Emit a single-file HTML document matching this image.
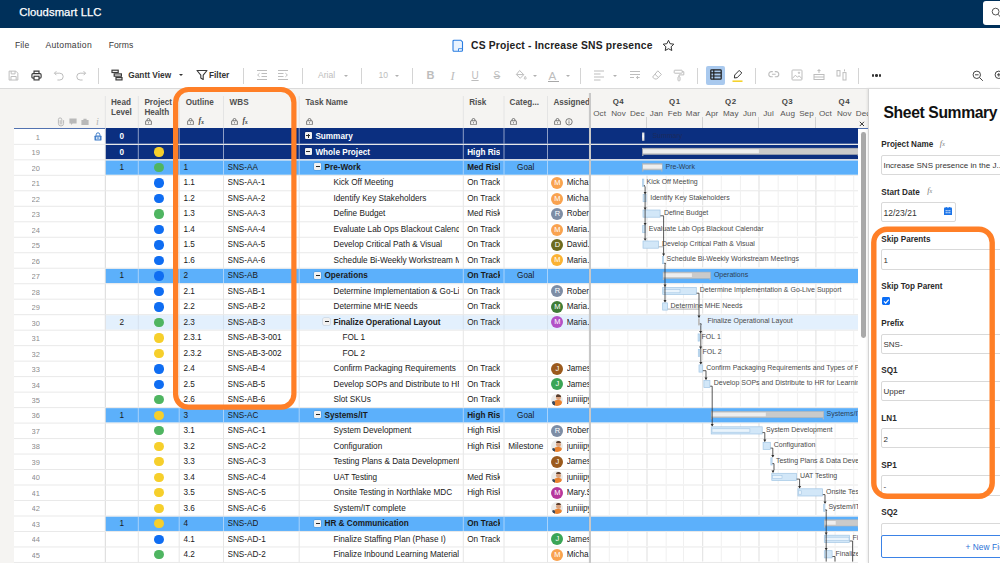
<!DOCTYPE html>
<html lang="en"><head><meta charset="utf-8"><title>CS Project - Increase SNS presence</title>
<style>
*{box-sizing:border-box}
html,body{margin:0;padding:0}
html{overflow:hidden;width:1000px;height:563px}
body{width:1000px;height:563px;overflow:hidden;position:relative;background:#fff;font-family:"Liberation Sans",sans-serif;color:#222}
.abs{position:absolute}
.t{position:absolute;white-space:nowrap;line-height:1}
#topbar{left:0;top:0;width:1000px;height:27.5px;background:#00305a}
#grid{left:0;top:88px;width:868.5px;height:475px;background:#fff;overflow:hidden}
.hdr{position:absolute;left:0;top:0;width:868.5px;height:40.2px;background:#f5f4f2}
.gut{position:absolute;left:0;top:0;width:14px;height:475px;background:#f5f4f2}
.row{position:absolute;left:14px;width:844.4px}
.c{position:absolute;top:0;height:100%;overflow:hidden;white-space:nowrap;font-size:8.2px;line-height:1;color:#1a1a1a}
.c>span.x{position:absolute;overflow:hidden;font-weight:inherit;line-height:1;white-space:nowrap;padding:2px 0 3px;margin-top:-2px}
.navy .c{color:#fff}
.vl{position:absolute;top:0;width:1px;background:#e0e0e0}
.c>span.num{font-size:7.5px;color:#8c8c8c}
.dot{position:absolute;width:9.3px;height:9.3px;border-radius:50%}
.av{position:absolute;width:12px;height:12px;border-radius:50%;color:#fff;font-size:7.5px;text-align:center;line-height:12.3px}
.tg{position:absolute;width:7px;height:7px;border-radius:1.1px;background:#f1f1f1;box-shadow:0 0 0 .5px rgba(0,0,0,.16)}
.tg i{position:absolute;background:#2b2b2b}
.lbl{font-weight:bold;font-size:8.15px;color:#2a2a2a}
.inp{position:absolute;border:1px solid #d9d9d9;border-radius:2px;background:#fff;height:20.4px;font-size:8px;color:#333;line-height:19.4px;padding-left:1.7px;white-space:nowrap;overflow:hidden;letter-spacing:0.02px}
.ht{font-weight:bold;font-size:8.15px;color:#505050;position:absolute;white-space:nowrap;line-height:9.5px}
.gl{position:absolute;white-space:nowrap;font-size:7px;color:#4a4a4a;line-height:1}
.car{position:absolute;width:0;height:0;border-left:2px solid transparent;border-right:2px solid transparent;border-top:2.6px solid #b0b0b0}
</style></head><body>

<div id="topbar" class="abs"></div>
<div class="t" style="left:19.2px;top:7px;font-size:11.3px;color:#fff;letter-spacing:0.05px;-webkit-text-stroke:0.25px #fff;">Cloudsmart LLC</div>
<div class="abs" style="left:983px;top:1.2px;width:30px;height:23.4px;background:#fff;border-radius:3px"></div>
<svg class="abs" style="left:990px;top:6px" width="12" height="14" viewBox="0 0 12 14"><circle cx="5.6" cy="5.6" r="3.4" fill="none" stroke="#555" stroke-width="1"/><path d="M8 8.2 L11 11.6" stroke="#555" stroke-width="1"/></svg>
<div class="t" style="left:14.9px;top:41px;font-size:8.6px;color:#3a3a3a;letter-spacing:0.15px;">File</div>
<div class="t" style="left:45.5px;top:41px;font-size:8.6px;color:#3a3a3a;letter-spacing:0.3px;">Automation</div>
<div class="t" style="left:108.7px;top:41px;font-size:8.6px;color:#3a3a3a;letter-spacing:0.05px;">Forms</div>
<svg class="abs" style="left:452px;top:38.5px" width="12" height="14" viewBox="0 0 12 14"><path d="M2 1.2h6.8l1.7 1.7v8.4a1 1 0 0 1-1 1H2a1 1 0 0 1-1-1V2.2a1 1 0 0 1 1-1z" fill="#eaf3fe" stroke="#2a7de1" stroke-width="1.1"/><path d="M6.5 12.3v-2.6h4" fill="#fff" stroke="#2a7de1" stroke-width="0.9"/></svg>
<div class="t" style="left:471.0px;top:41px;font-size:10.3px;color:#222;font-weight:bold;letter-spacing:0.19px;">CS Project - Increase SNS presence</div>
<svg class="abs" style="left:662px;top:38.8px" width="13" height="13" viewBox="0 0 13 13"><path d="M6.5 1.3l1.6 3.4 3.7.5-2.7 2.6.7 3.7-3.3-1.8-3.3 1.8.7-3.7L1.2 5.2l3.7-.5z" fill="none" stroke="#333" stroke-width="1" stroke-linejoin="round"/></svg>
<div class="abs" style="left:0;top:88px;width:1000px;height:1px;background:#dadada;z-index:5"></div>
<div class="abs" style="left:98.4px;top:68.2px;width:1px;height:15.6px;background:#d4d4d4"></div>
<div class="abs" style="left:243.0px;top:68.2px;width:1px;height:15.6px;background:#d4d4d4"></div>
<div class="abs" style="left:301.5px;top:68.2px;width:1px;height:15.6px;background:#d4d4d4"></div>
<div class="abs" style="left:360.9px;top:68.2px;width:1px;height:15.6px;background:#d4d4d4"></div>
<div class="abs" style="left:412.2px;top:68.2px;width:1px;height:15.6px;background:#d4d4d4"></div>
<div class="abs" style="left:580.2px;top:68.2px;width:1px;height:15.6px;background:#d4d4d4"></div>
<div class="abs" style="left:696.9px;top:68.2px;width:1px;height:15.6px;background:#d4d4d4"></div>
<div class="abs" style="left:754.9px;top:68.2px;width:1px;height:15.6px;background:#d4d4d4"></div>
<div class="abs" style="left:857.9px;top:68.2px;width:1px;height:15.6px;background:#d4d4d4"></div>
<svg class="abs" style="left:8.3px;top:70.0px" width="11.16" height="11.16" viewBox="0 0 12 12" fill="none" stroke="#bdbdbd" stroke-width="1.05" ><path d="M1.2 1.2h7.2l2.2 2.2v7.4H1.2z"/><path d="M3.4 1.2v3h4.2v-3M3.2 10.8V7h5.6v3.8"/></svg>
<svg class="abs" style="left:30.9px;top:69.6px" width="11.04" height="11.04" viewBox="0 0 12 12" fill="none" stroke="#3a3a3a" stroke-width="1.25" ><path d="M3.3 4V1.3h5.4V4"/><rect x="1" y="4" width="10" height="4.8" rx="1.2"/><rect x="3.3" y="6.8" width="5.4" height="4" fill="#fff"/></svg>
<svg class="abs" style="left:53px;top:70.0px" width="12.00" height="12.00" viewBox="0 0 12 12" fill="none" stroke="#bdbdbd" stroke-width="1" ><path d="M3.4 1.2L1.4 3.2l2 2"/><path d="M1.6 3.2h5.2a3.4 3.4 0 0 1 0 6.8H4.4"/></svg>
<svg class="abs" style="left:75px;top:70.0px" width="12.00" height="12.00" viewBox="0 0 12 12" fill="none" stroke="#bdbdbd" stroke-width="1" ><path d="M8.6 1.2l2 2-2 2"/><path d="M10.4 3.2H5.2a3.4 3.4 0 0 0 0 6.8h2.4"/></svg>
<svg class="abs" style="left:111px;top:69.0px" width="12.00" height="12.00" viewBox="0 0 12 12" fill="none" stroke="#3a3a3a" stroke-width="1.2" ><rect x="1" y="1.2" width="6.2" height="2.3"/><rect x="3.2" y="4.9" width="7.2" height="2.3"/><rect x="5" y="8.6" width="6" height="2.3"/></svg>
<div class="t" style="left:128.2px;top:71px;font-size:8.3px;color:#333;font-weight:bold;letter-spacing:0.02px;">Gantt View</div>
<div class="car" style="left:178.8px;top:74.2px;border-top-color:#333;border-left-width:2.2px;border-right-width:2.2px;border-top-width:2.8px"></div>
<svg class="abs" style="left:196px;top:69.2px" width="12.00" height="12.00" viewBox="0 0 12 12" fill="none" stroke="#3a3a3a" stroke-width="1.1" stroke-linejoin="round"><path d="M1 1.5h10L7.2 6.2v4.3L4.8 9V6.2z"/></svg>
<div class="t" style="left:209.0px;top:71px;font-size:8.3px;color:#333;font-weight:bold;">Filter</div>
<svg class="abs" style="left:256px;top:69.2px" width="12.00" height="12.00" viewBox="0 0 12 12" fill="none" stroke="#bdbdbd" stroke-width="1" ><path d="M1 1.5h10M5.5 4.5H11M5.5 7.5H11M1 10.5h10M3.6 4.2L1.6 6l2 1.8"/></svg>
<svg class="abs" style="left:277px;top:69.2px" width="12.00" height="12.00" viewBox="0 0 12 12" fill="none" stroke="#bdbdbd" stroke-width="1" ><path d="M1 1.5h10M1 4.5h5.5M1 7.5h5.5M1 10.5h10M8.4 4.2l2 1.8-2 1.8"/></svg>
<div class="t" style="left:318.0px;top:71px;font-size:8.6px;color:#bdbdbd;">Arial</div>
<div class="car" style="left:343.6px;top:74.6px"></div>
<div class="t" style="left:378.4px;top:71px;font-size:8.6px;color:#bdbdbd;">10</div>
<div class="car" style="left:394.6px;top:74.6px"></div>
<div class="t" style="left:426.4px;top:70px;font-size:11px;color:#bdbdbd;font-weight:bold;">B</div>
<div class="t" style="left:450.4px;top:70px;font-size:12.5px;color:#bdbdbd;font-style:italic;font-family:'Liberation Serif',serif;">I</div>
<div class="t" style="left:471.4px;top:71px;font-size:10px;color:#bdbdbd;text-decoration:underline;">U</div>
<div class="t" style="left:493.6px;top:71px;font-size:10px;color:#bdbdbd;text-decoration:line-through;">S</div>
<svg class="abs" style="left:515px;top:68.8px" width="12.00" height="12.00" viewBox="0 0 12 12" fill="none" stroke="#bdbdbd" stroke-width="1" ><path d="M4.6 1.5L8.8 5.7 5.2 9.3 1.4 5.5z"/><path d="M1.6 5.6h7"/><path d="M10.2 7.4c.6.9.9 1.4.9 1.9a.9.9 0 0 1-1.8 0c0-.5.3-1 .9-1.9z"/></svg>
<div class="car" style="left:532.6px;top:74.6px"></div>
<div class="t" style="left:548.4px;top:70px;font-size:11.6px;color:#bdbdbd;">A</div>
<div class="abs" style="left:547.6px;top:80.8px;width:11.2px;height:1.6px;background:#a8a8a8"></div>
<div class="car" style="left:565.6px;top:74.6px"></div>
<svg class="abs" style="left:593px;top:69.2px" width="12.00" height="12.00" viewBox="0 0 12 12" fill="none" stroke="#bdbdbd" stroke-width="1" ><path d="M1 2h10M1 5h6.5M1 8h10M1 11h6.5"/></svg>
<div class="car" style="left:612.6px;top:74.6px"></div>
<svg class="abs" style="left:629px;top:69.2px" width="12.00" height="12.00" viewBox="0 0 12 12" fill="none" stroke="#bdbdbd" stroke-width="1" ><path d="M1 2.5h10M1 5.5h10M1 8.5h4M7.5 8.5h3.2M9 7l-1.6 1.5L9 10"/></svg>
<svg class="abs" style="left:651px;top:69.2px" width="12.00" height="12.00" viewBox="0 0 12 12" fill="none" stroke="#bdbdbd" stroke-width="1" stroke-linejoin="round"><path d="M6.8 1.8l3.6 3.6-4.6 4.6H3.6L1.6 8z"/><path d="M3.8 5l3.4 3.4"/></svg>
<svg class="abs" style="left:673px;top:68.8px" width="12.00" height="13.00" viewBox="0 0 12 13" fill="none" stroke="#bdbdbd" stroke-width="1" ><rect x="1.2" y="1.2" width="8" height="3" rx=".6"/><path d="M9.2 2.7h1.6v3.2H6v2"/><rect x="5" y="7.8" width="2" height="4" rx=".6"/></svg>
<div class="abs" style="left:705.5px;top:65.8px;width:19.5px;height:19.4px;background:#a9c9ee;border-radius:2px"></div>
<svg class="abs" style="left:709.6px;top:69.4px" width="12.00" height="11.00" viewBox="0 0 12 11" fill="none" stroke="#1e1e1e" stroke-width="1.2" ><rect x=".8" y=".8" width="10.4" height="9.4" rx=".8"/><path d="M.8 3.9h10.4M.8 7h10.4M3.8 .8v9.4"/></svg>
<svg class="abs" style="left:731px;top:68.6px" width="13" height="14" viewBox="0 0 13 14" fill="none"><path d="M8.2 1.4l2.6 2.6-4.6 4.6-2.8.4.3-3z" stroke="#333" stroke-width="1" stroke-linejoin="round"/><path d="M1.5 12.2h10" stroke="#f5d22d" stroke-width="1.6"/></svg>
<svg class="abs" style="left:767.6px;top:70.4px" width="12.00" height="9.00" viewBox="0 0 12 9" fill="none" stroke="#bdbdbd" stroke-width="1.1" ><path d="M4.8 1.6H3.4a2.6 2.6 0 0 0 0 5.2h1.4M6.8 1.6h1.4a2.6 2.6 0 0 1 0 5.2H6.8M3.9 4.2h3.8"/></svg>
<svg class="abs" style="left:790.6px;top:69.2px" width="12.00" height="12.00" viewBox="0 0 12 12" fill="none" stroke="#bdbdbd" stroke-width="1" ><rect x="1" y="1" width="10" height="10" rx=".8"/><path d="M1.4 9.4l3-3.2 2 2 1.6-1.4 2.8 2.6"/><circle cx="8" cy="3.8" r=".7"/></svg>
<svg class="abs" style="left:812.6px;top:68.2px" width="12.00" height="13.00" viewBox="0 0 12 13" fill="none" stroke="#bdbdbd" stroke-width="1" ><rect x="1" y="6.5" width="10" height="5"/><path d="M1 9h10M6 1v4M4.4 2.6h3.2"/></svg>
<svg class="abs" style="left:835.6px;top:68.8px" width="12.00" height="12.00" viewBox="0 0 12 12" fill="none" stroke="#bdbdbd" stroke-width="1" ><rect x="1" y="1.6" width="3" height="5.4"/><rect x="7" y="3.6" width="3" height="7.4"/><path d="M8.5 .4v2"/></svg>
<div class="abs" style="left:871.6px;top:74.1px;width:2.6px;height:2.6px;border-radius:50%;background:#333"></div>
<div class="abs" style="left:875.1px;top:74.1px;width:2.6px;height:2.6px;border-radius:50%;background:#333"></div>
<div class="abs" style="left:878.6px;top:74.1px;width:2.6px;height:2.6px;border-radius:50%;background:#333"></div>
<svg class="abs" style="left:971.5px;top:69.6px" width="12.00" height="12.00" viewBox="0 0 12 12" fill="none" stroke="#444" stroke-width="1" ><circle cx="4.8" cy="4.8" r="3.7"/><path d="M7.6 7.6l3.2 3.2M3 4.8h3.6"/></svg>
<svg class="abs" style="left:993.5px;top:69.6px" width="12.00" height="12.00" viewBox="0 0 12 12" fill="none" stroke="#444" stroke-width="1" ><circle cx="4.8" cy="4.8" r="3.7"/><path d="M7.6 7.6l3.2 3.2M3 4.8h3.6M4.8 3v3.6"/></svg>
<div id="grid" class="abs">
<div class="hdr"></div><div class="gut"></div>
<svg class="abs" style="left:0;top:0" width="600" height="41" viewBox="0 0 600 41"><path d="M105.3 8V40.2M138.3 8V40.2M179.2 8V40.2M223.5 8V40.2M299.2 8V40.2M463.3 8V40.2M504.0 8V40.2M547.5 8V40.2" stroke="#e4e4e4" stroke-width="1"/></svg>
<div class="ht" style="left:111.0px;top:10.0px">Head<br>Level</div>
<div class="ht" style="left:144.4px;top:10.0px">Project<br>Health</div>
<div class="ht" style="left:185.8px;top:10.0px">Outline</div>
<div class="ht" style="left:229.6px;top:10.0px">WBS</div>
<div class="ht" style="left:305.5px;top:10.0px">Task Name</div>
<div class="ht" style="left:469.2px;top:10.0px">Risk</div>
<div class="ht" style="left:509.6px;top:10.0px">Categ...</div>
<div class="ht" style="left:553.4px;top:10.0px">Assigned</div>
<svg class="abs" style="left:145.2px;top:30.0px" width="7" height="7.4" viewBox="0 0 7 7.4" fill="none" stroke="#555" stroke-width=".75"><rect x=".6" y="2.8" width="5.8" height="4" rx=".5"/><path d="M2 2.8V2a1.5 1.5 0 0 1 3 0v.8"/><path d="M3.5 4.2v1.2"/></svg>
<svg class="abs" style="left:186.8px;top:30.0px" width="7" height="7.4" viewBox="0 0 7 7.4" fill="none" stroke="#555" stroke-width=".75"><rect x=".6" y="2.8" width="5.8" height="4" rx=".5"/><path d="M2 2.8V2a1.5 1.5 0 0 1 3 0v.8"/><path d="M3.5 4.2v1.2"/></svg>
<div class="t" style="left:198.6px;top:29.4px;font-size:7.6px;font-style:italic;font-weight:bold;color:#444;font-family:'Liberation Serif',serif">f<span style="font-size:62%;font-weight:bold;font-family:'Liberation Sans',sans-serif;font-style:normal;position:relative;top:0.6px">x</span></div>
<svg class="abs" style="left:230.6px;top:30.0px" width="7" height="7.4" viewBox="0 0 7 7.4" fill="none" stroke="#555" stroke-width=".75"><rect x=".6" y="2.8" width="5.8" height="4" rx=".5"/><path d="M2 2.8V2a1.5 1.5 0 0 1 3 0v.8"/><path d="M3.5 4.2v1.2"/></svg>
<div class="t" style="left:242.4px;top:29.4px;font-size:7.6px;font-style:italic;font-weight:bold;color:#444;font-family:'Liberation Serif',serif">f<span style="font-size:62%;font-weight:bold;font-family:'Liberation Sans',sans-serif;font-style:normal;position:relative;top:0.6px">x</span></div>
<svg class="abs" style="left:306.0px;top:30.0px" width="7" height="7.4" viewBox="0 0 7 7.4" fill="none" stroke="#555" stroke-width=".75"><rect x=".6" y="2.8" width="5.8" height="4" rx=".5"/><path d="M2 2.8V2a1.5 1.5 0 0 1 3 0v.8"/><path d="M3.5 4.2v1.2"/></svg>
<svg class="abs" style="left:469.6px;top:30.0px" width="7" height="7.4" viewBox="0 0 7 7.4" fill="none" stroke="#555" stroke-width=".75"><rect x=".6" y="2.8" width="5.8" height="4" rx=".5"/><path d="M2 2.8V2a1.5 1.5 0 0 1 3 0v.8"/><path d="M3.5 4.2v1.2"/></svg>
<svg class="abs" style="left:510.0px;top:30.0px" width="7" height="7.4" viewBox="0 0 7 7.4" fill="none" stroke="#555" stroke-width=".75"><rect x=".6" y="2.8" width="5.8" height="4" rx=".5"/><path d="M2 2.8V2a1.5 1.5 0 0 1 3 0v.8"/><path d="M3.5 4.2v1.2"/></svg>
<svg class="abs" style="left:554.2px;top:30.0px" width="7" height="7.4" viewBox="0 0 7 7.4" fill="none" stroke="#555" stroke-width=".75"><rect x=".6" y="2.8" width="5.8" height="4" rx=".5"/><path d="M2 2.8V2a1.5 1.5 0 0 1 3 0v.8"/><path d="M3.5 4.2v1.2"/></svg>
<svg class="abs" style="left:564.8px;top:30.0px" width="8" height="8" viewBox="0 0 8 8" fill="none" stroke="#555" stroke-width=".75"><circle cx="4" cy="3.8" r="3.2"/><path d="M4 3.3v2.3M4 1.9v.7"/></svg>
<svg class="abs" style="left:56.8px;top:28.8px" width="8" height="10" viewBox="0 0 8 10" fill="none" stroke="#b9b9b9" stroke-width="1"><path d="M6.6 3.2v3.2a2.6 2.6 0 0 1-5.2 0V2.6a1.7 1.7 0 0 1 3.4 0v3.8a.8.8 0 0 1-1.6 0V3.2"/></svg>
<svg class="abs" style="left:69px;top:30.4px" width="8" height="8" viewBox="0 0 8 8"><path d="M.4.6h7.2v4.8H3.6L2 7V5.4H.4z" fill="#b9b9b9"/></svg>
<svg class="abs" style="left:81.4px;top:29.8px" width="8" height="8" viewBox="0 0 8 8"><path d="M.4 2h7.2v5H.4zM2.4 .8h3.2v1.2H2.4z" fill="#b9b9b9"/></svg>
<div class="t" style="left:96.0px;top:28.6px;font-size:10.4px;font-style:italic;color:#b4b4b4;font-family:'Liberation Serif',serif">i</div>
<div class="abs" style="left:14px;top:39.5px;width:91.4px;height:1px;background:#5272b0;z-index:2"></div>
<svg class="abs" style="left:0;top:0" width="868.5" height="475" viewBox="0 88.0 868.5 475"><rect x="14" y="128" width="844.4" height="435" fill="#fff"/><path d="M138.3 128V563M179.2 128V563M223.5 128V563M299.2 128V563M463.3 128V563M504.0 128V563M547.5 128V563" stroke="#e6e6e6" stroke-width="1"/><path d="M105.3 128V563" stroke="#d9d9d9" stroke-width="1"/><rect x="105.8" y="128.00" width="752.6" height="15.85" fill="#0b2f80"/><path d="M138.3 128.00V143.85M179.2 128.00V143.85M223.5 128.00V143.85M299.2 128.00V143.85M463.3 128.00V143.85M504.0 128.00V143.85M547.5 128.00V143.85" stroke="#8e9fc6" stroke-width="1"/><rect x="105.8" y="144.85" width="752.6" height="14.48" fill="#0b2f80"/><path d="M138.3 144.85V159.33M179.2 144.85V159.33M223.5 144.85V159.33M299.2 144.85V159.33M463.3 144.85V159.33M504.0 144.85V159.33M547.5 144.85V159.33" stroke="#8e9fc6" stroke-width="1"/><rect x="105.8" y="160.34" width="752.6" height="14.48" fill="#5cb0fb"/><path d="M138.3 160.34V174.82M179.2 160.34V174.82M223.5 160.34V174.82M299.2 160.34V174.82M463.3 160.34V174.82M504.0 160.34V174.82M547.5 160.34V174.82" stroke="#a9d3fb" stroke-width="1"/><rect x="105.8" y="268.73" width="752.6" height="14.49" fill="#5cb0fb"/><path d="M138.3 268.73V283.22M179.2 268.73V283.22M223.5 268.73V283.22M299.2 268.73V283.22M463.3 268.73V283.22M504.0 268.73V283.22M547.5 268.73V283.22" stroke="#a9d3fb" stroke-width="1"/><rect x="105.8" y="315.19" width="752.6" height="14.48" fill="#e3f0fd"/><path d="M138.3 315.19V329.67M179.2 315.19V329.67M223.5 315.19V329.67M299.2 315.19V329.67M463.3 315.19V329.67M504.0 315.19V329.67M547.5 315.19V329.67" stroke="#d6e2ee" stroke-width="1"/><rect x="105.8" y="408.10" width="752.6" height="14.49" fill="#5cb0fb"/><path d="M138.3 408.10V422.58M179.2 408.10V422.58M223.5 408.10V422.58M299.2 408.10V422.58M463.3 408.10V422.58M504.0 408.10V422.58M547.5 408.10V422.58" stroke="#a9d3fb" stroke-width="1"/><rect x="105.8" y="516.49" width="752.6" height="14.49" fill="#5cb0fb"/><path d="M138.3 516.49V530.98M179.2 516.49V530.98M223.5 516.49V530.98M299.2 516.49V530.98M463.3 516.49V530.98M504.0 516.49V530.98M547.5 516.49V530.98" stroke="#a9d3fb" stroke-width="1"/><path d="M14 144.35H858.4M14 159.83H858.4M14 175.32H858.4M14 190.81H858.4M14 206.29H858.4M14 221.77H858.4M14 237.26H858.4M14 252.75H858.4M14 268.23H858.4M14 283.72H858.4M14 299.20H858.4M14 314.68H858.4M14 330.17H858.4M14 345.65H858.4M14 361.14H858.4M14 376.62H858.4M14 392.11H858.4M14 407.60H858.4M14 423.08H858.4M14 438.56H858.4M14 454.05H858.4M14 469.53H858.4M14 485.02H858.4M14 500.50H858.4M14 515.99H858.4M14 531.48H858.4M14 546.96H858.4M14 562.44H858.4" stroke="#e9e9e9" stroke-width="1"/></svg>
<div class="row navy" style="top:40.50px;height:15.35px">
<div class="c" style="left:0;width:90.8px"><span class="x num" style="right:64.9px;top:5.52px">1</span><svg style="position:absolute;left:79.6px;top:3.41px" width="8" height="9" viewBox="0 0 8 9"><path d="M2.2 3.6V2.6a1.8 1.8 0 0 1 3.6 0v1" fill="none" stroke="#3d7bc8" stroke-width="1"/><rect x=".5" y="3.4" width="7" height="5.2" rx=".9" fill="#3d7bc8"/><rect x="1.9" y="4.7" width="4.2" height="2.7" rx=".3" fill="#cfe1f5"/><rect x="3.5" y="5.2" width="1" height="1.7" fill="#3d7bc8"/></svg></div>
<div class="c" style="left:91.8px;width:32.0px;font-weight:bold;"><span class="x" style="left:0.0px;top:4.52px;width:32.0px;text-align:center;">0</span></div>
<div class="c" style="left:124.8px;width:39.9px;"></div>
<div class="c" style="left:165.7px;width:43.3px;"></div>
<div class="c" style="left:210.0px;width:74.7px;"></div>
<div class="c" style="left:285.7px;width:163.1px;font-weight:bold;"><span class="tg" style="left:5.0px;top:3.96px"><i style="left:1.5px;top:2.95px;width:4px;height:1.1px"></i><i style="left:2.95px;top:1.5px;width:1.1px;height:4px"></i></span><span class="x" style="left:15.7px;top:4.52px;width:143.3px;">Summary</span></div>
<div class="c" style="left:449.8px;width:39.7px;font-weight:bold;"></div>
<div class="c" style="left:490.5px;width:42.5px;"></div>
<div class="c" style="left:534.0px;width:40.8px;"></div>
</div>
<div class="row navy" style="top:56.85px;height:14.48px">
<div class="c" style="left:0;width:90.8px"><span class="x num" style="right:64.9px;top:4.17px">19</span></div>
<div class="c" style="left:91.8px;width:32.0px;font-weight:bold;"><span class="x" style="left:0.0px;top:4.17px;width:32.0px;text-align:center;">0</span></div>
<div class="c" style="left:124.8px;width:39.9px;"><span class="dot" style="left:15.5px;top:2.59px;background:#f6cf2b"></span></div>
<div class="c" style="left:165.7px;width:43.3px;"></div>
<div class="c" style="left:210.0px;width:74.7px;"></div>
<div class="c" style="left:285.7px;width:163.1px;font-weight:bold;"><span class="tg" style="left:5.0px;top:3.09px"><i style="left:1.5px;top:2.95px;width:4px;height:1.1px"></i></span><span class="x" style="left:15.7px;top:4.17px;width:143.3px;">Whole Project</span></div>
<div class="c" style="left:449.8px;width:39.7px;font-weight:bold;"><span class="x" style="left:3.4px;top:4.17px;width:33.1px;">High Risk</span></div>
<div class="c" style="left:490.5px;width:42.5px;"></div>
<div class="c" style="left:534.0px;width:40.8px;"></div>
</div>
<div class="row lb" style="top:72.34px;height:14.48px">
<div class="c" style="left:0;width:90.8px"><span class="x num" style="right:64.9px;top:4.68px">20</span></div>
<div class="c" style="left:91.8px;width:32.0px;"><span class="x" style="left:0.0px;top:3.68px;width:32.0px;text-align:center;">1</span></div>
<div class="c" style="left:124.8px;width:39.9px;"><span class="dot" style="left:15.5px;top:2.59px;background:#4fb561"></span></div>
<div class="c" style="left:165.7px;width:43.3px;"><span class="x" style="left:3.7px;top:3.68px;">1</span></div>
<div class="c" style="left:210.0px;width:74.7px;"><span class="x" style="left:3.5px;top:3.68px;">SNS-AA</span></div>
<div class="c" style="left:285.7px;width:163.1px;font-weight:bold;"><span class="tg" style="left:14.4px;top:3.09px"><i style="left:1.5px;top:2.95px;width:4px;height:1.1px"></i></span><span class="x" style="left:24.8px;top:3.68px;width:134.2px;">Pre-Work</span></div>
<div class="c" style="left:449.8px;width:39.7px;font-weight:bold;"><span class="x" style="left:3.4px;top:3.68px;width:33.1px;">Med Risk</span></div>
<div class="c" style="left:490.5px;width:42.5px;"><span class="x" style="left:0.0px;top:3.68px;width:42.5px;text-align:center;">Goal</span></div>
<div class="c" style="left:534.0px;width:40.8px;"></div>
</div>
<div class="row " style="top:87.82px;height:14.48px">
<div class="c" style="left:0;width:90.8px"><span class="x num" style="right:64.9px;top:4.20px">21</span></div>
<div class="c" style="left:91.8px;width:32.0px;"></div>
<div class="c" style="left:124.8px;width:39.9px;"><span class="dot" style="left:15.5px;top:2.59px;background:#0f6df2"></span></div>
<div class="c" style="left:165.7px;width:43.3px;"><span class="x" style="left:3.7px;top:3.20px;">1.1</span></div>
<div class="c" style="left:210.0px;width:74.7px;"><span class="x" style="left:3.5px;top:3.20px;">SNS-AA-1</span></div>
<div class="c" style="left:285.7px;width:163.1px;"><span class="x" style="left:33.8px;top:3.20px;width:125.2px;">Kick Off Meeting</span></div>
<div class="c" style="left:449.8px;width:39.7px;"><span class="x" style="left:3.4px;top:3.20px;width:33.1px;">On Track</span></div>
<div class="c" style="left:490.5px;width:42.5px;"></div>
<div class="c" style="left:534.0px;width:40.8px;"><span class="av" style="left:3.4px;top:1.24px;background:#f9a24f">M</span><span class="x" style="left:18.7px;top:3.20px;">Micha</span></div>
</div>
<div class="row " style="top:103.31px;height:14.48px">
<div class="c" style="left:0;width:90.8px"><span class="x num" style="right:64.9px;top:4.71px">22</span></div>
<div class="c" style="left:91.8px;width:32.0px;"></div>
<div class="c" style="left:124.8px;width:39.9px;"><span class="dot" style="left:15.5px;top:2.59px;background:#0f6df2"></span></div>
<div class="c" style="left:165.7px;width:43.3px;"><span class="x" style="left:3.7px;top:3.71px;">1.2</span></div>
<div class="c" style="left:210.0px;width:74.7px;"><span class="x" style="left:3.5px;top:3.71px;">SNS-AA-2</span></div>
<div class="c" style="left:285.7px;width:163.1px;"><span class="x" style="left:33.8px;top:3.71px;width:125.2px;">Identify Key Stakeholders</span></div>
<div class="c" style="left:449.8px;width:39.7px;"><span class="x" style="left:3.4px;top:3.71px;width:33.1px;">On Track</span></div>
<div class="c" style="left:490.5px;width:42.5px;"></div>
<div class="c" style="left:534.0px;width:40.8px;"><span class="av" style="left:3.4px;top:1.24px;background:#f9a24f">M</span><span class="x" style="left:18.7px;top:3.71px;">Micha</span></div>
</div>
<div class="row " style="top:118.79px;height:14.48px">
<div class="c" style="left:0;width:90.8px"><span class="x num" style="right:64.9px;top:4.23px">23</span></div>
<div class="c" style="left:91.8px;width:32.0px;"></div>
<div class="c" style="left:124.8px;width:39.9px;"><span class="dot" style="left:15.5px;top:2.59px;background:#4fb561"></span></div>
<div class="c" style="left:165.7px;width:43.3px;"><span class="x" style="left:3.7px;top:3.23px;">1.3</span></div>
<div class="c" style="left:210.0px;width:74.7px;"><span class="x" style="left:3.5px;top:3.23px;">SNS-AA-3</span></div>
<div class="c" style="left:285.7px;width:163.1px;"><span class="x" style="left:33.8px;top:3.23px;width:125.2px;">Define Budget</span></div>
<div class="c" style="left:449.8px;width:39.7px;"><span class="x" style="left:3.4px;top:3.23px;width:33.1px;">Med Risk</span></div>
<div class="c" style="left:490.5px;width:42.5px;"></div>
<div class="c" style="left:534.0px;width:40.8px;"><span class="av" style="left:3.4px;top:1.24px;background:#7d8da5">R</span><span class="x" style="left:18.7px;top:3.23px;">Rober</span></div>
</div>
<div class="row " style="top:134.28px;height:14.48px">
<div class="c" style="left:0;width:90.8px"><span class="x num" style="right:64.9px;top:4.74px">24</span></div>
<div class="c" style="left:91.8px;width:32.0px;"></div>
<div class="c" style="left:124.8px;width:39.9px;"><span class="dot" style="left:15.5px;top:2.59px;background:#0f6df2"></span></div>
<div class="c" style="left:165.7px;width:43.3px;"><span class="x" style="left:3.7px;top:3.74px;">1.4</span></div>
<div class="c" style="left:210.0px;width:74.7px;"><span class="x" style="left:3.5px;top:3.74px;">SNS-AA-4</span></div>
<div class="c" style="left:285.7px;width:163.1px;"><span class="x" style="left:33.8px;top:3.74px;width:125.2px;">Evaluate Lab Ops Blackout Calendar</span></div>
<div class="c" style="left:449.8px;width:39.7px;"><span class="x" style="left:3.4px;top:3.74px;width:33.1px;">On Track</span></div>
<div class="c" style="left:490.5px;width:42.5px;"></div>
<div class="c" style="left:534.0px;width:40.8px;"><span class="av" style="left:3.4px;top:1.24px;background:#f9a24f">M</span><span class="x" style="left:18.7px;top:3.74px;">Maria.</span></div>
</div>
<div class="row " style="top:149.76px;height:14.48px">
<div class="c" style="left:0;width:90.8px"><span class="x num" style="right:64.9px;top:4.26px">25</span></div>
<div class="c" style="left:91.8px;width:32.0px;"></div>
<div class="c" style="left:124.8px;width:39.9px;"><span class="dot" style="left:15.5px;top:2.59px;background:#0f6df2"></span></div>
<div class="c" style="left:165.7px;width:43.3px;"><span class="x" style="left:3.7px;top:3.26px;">1.5</span></div>
<div class="c" style="left:210.0px;width:74.7px;"><span class="x" style="left:3.5px;top:3.26px;">SNS-AA-5</span></div>
<div class="c" style="left:285.7px;width:163.1px;"><span class="x" style="left:33.8px;top:3.26px;width:125.2px;">Develop Critical Path &amp; Visual</span></div>
<div class="c" style="left:449.8px;width:39.7px;"><span class="x" style="left:3.4px;top:3.26px;width:33.1px;">On Track</span></div>
<div class="c" style="left:490.5px;width:42.5px;"></div>
<div class="c" style="left:534.0px;width:40.8px;"><span class="av" style="left:3.4px;top:1.24px;background:#6c6b20">D</span><span class="x" style="left:18.7px;top:3.26px;">David.</span></div>
</div>
<div class="row " style="top:165.25px;height:14.48px">
<div class="c" style="left:0;width:90.8px"><span class="x num" style="right:64.9px;top:4.77px">26</span></div>
<div class="c" style="left:91.8px;width:32.0px;"></div>
<div class="c" style="left:124.8px;width:39.9px;"><span class="dot" style="left:15.5px;top:2.59px;background:#0f6df2"></span></div>
<div class="c" style="left:165.7px;width:43.3px;"><span class="x" style="left:3.7px;top:3.77px;">1.6</span></div>
<div class="c" style="left:210.0px;width:74.7px;"><span class="x" style="left:3.5px;top:3.77px;">SNS-AA-6</span></div>
<div class="c" style="left:285.7px;width:163.1px;"><span class="x" style="left:33.8px;top:3.77px;width:125.2px;">Schedule Bi-Weekly Workstream Meetings</span></div>
<div class="c" style="left:449.8px;width:39.7px;"><span class="x" style="left:3.4px;top:3.77px;width:33.1px;">On Track</span></div>
<div class="c" style="left:490.5px;width:42.5px;"></div>
<div class="c" style="left:534.0px;width:40.8px;"><span class="av" style="left:3.4px;top:1.24px;background:#fbb233">M</span><span class="x" style="left:18.7px;top:3.77px;">Maria.</span></div>
</div>
<div class="row lb" style="top:180.73px;height:14.48px">
<div class="c" style="left:0;width:90.8px"><span class="x num" style="right:64.9px;top:4.29px">27</span></div>
<div class="c" style="left:91.8px;width:32.0px;"><span class="x" style="left:0.0px;top:3.29px;width:32.0px;text-align:center;">1</span></div>
<div class="c" style="left:124.8px;width:39.9px;"><span class="dot" style="left:15.5px;top:2.59px;background:#0f6df2"></span></div>
<div class="c" style="left:165.7px;width:43.3px;"><span class="x" style="left:3.7px;top:3.29px;">2</span></div>
<div class="c" style="left:210.0px;width:74.7px;"><span class="x" style="left:3.5px;top:3.29px;">SNS-AB</span></div>
<div class="c" style="left:285.7px;width:163.1px;font-weight:bold;"><span class="tg" style="left:14.4px;top:3.09px"><i style="left:1.5px;top:2.95px;width:4px;height:1.1px"></i></span><span class="x" style="left:24.8px;top:3.29px;width:134.2px;">Operations</span></div>
<div class="c" style="left:449.8px;width:39.7px;font-weight:bold;"><span class="x" style="left:3.4px;top:3.29px;width:33.1px;">On Track</span></div>
<div class="c" style="left:490.5px;width:42.5px;"><span class="x" style="left:0.0px;top:3.29px;width:42.5px;text-align:center;">Goal</span></div>
<div class="c" style="left:534.0px;width:40.8px;"></div>
</div>
<div class="row " style="top:196.22px;height:14.48px">
<div class="c" style="left:0;width:90.8px"><span class="x num" style="right:64.9px;top:4.80px">28</span></div>
<div class="c" style="left:91.8px;width:32.0px;"></div>
<div class="c" style="left:124.8px;width:39.9px;"><span class="dot" style="left:15.5px;top:2.59px;background:#0f6df2"></span></div>
<div class="c" style="left:165.7px;width:43.3px;"><span class="x" style="left:3.7px;top:3.80px;">2.1</span></div>
<div class="c" style="left:210.0px;width:74.7px;"><span class="x" style="left:3.5px;top:3.80px;">SNS-AB-1</span></div>
<div class="c" style="left:285.7px;width:163.1px;"><span class="x" style="left:33.8px;top:3.80px;width:125.2px;">Determine Implementation &amp; Go-Live</span></div>
<div class="c" style="left:449.8px;width:39.7px;"><span class="x" style="left:3.4px;top:3.80px;width:33.1px;">On Track</span></div>
<div class="c" style="left:490.5px;width:42.5px;"></div>
<div class="c" style="left:534.0px;width:40.8px;"><span class="av" style="left:3.4px;top:1.24px;background:#7d8da5">R</span><span class="x" style="left:18.7px;top:3.80px;">Rober</span></div>
</div>
<div class="row " style="top:211.70px;height:14.48px">
<div class="c" style="left:0;width:90.8px"><span class="x num" style="right:64.9px;top:4.32px">29</span></div>
<div class="c" style="left:91.8px;width:32.0px;"></div>
<div class="c" style="left:124.8px;width:39.9px;"><span class="dot" style="left:15.5px;top:2.59px;background:#0f6df2"></span></div>
<div class="c" style="left:165.7px;width:43.3px;"><span class="x" style="left:3.7px;top:3.32px;">2.2</span></div>
<div class="c" style="left:210.0px;width:74.7px;"><span class="x" style="left:3.5px;top:3.32px;">SNS-AB-2</span></div>
<div class="c" style="left:285.7px;width:163.1px;"><span class="x" style="left:33.8px;top:3.32px;width:125.2px;">Determine MHE Needs</span></div>
<div class="c" style="left:449.8px;width:39.7px;"><span class="x" style="left:3.4px;top:3.32px;width:33.1px;">On Track</span></div>
<div class="c" style="left:490.5px;width:42.5px;"></div>
<div class="c" style="left:534.0px;width:40.8px;"><span class="av" style="left:3.4px;top:1.24px;background:#3f7d36">M</span><span class="x" style="left:18.7px;top:3.32px;">Maria.</span></div>
</div>
<div class="row vlb" style="top:227.19px;height:14.48px">
<div class="c" style="left:0;width:90.8px"><span class="x num" style="right:64.9px;top:4.83px">30</span></div>
<div class="c" style="left:91.8px;width:32.0px;"><span class="x" style="left:0.0px;top:3.83px;width:32.0px;text-align:center;">2</span></div>
<div class="c" style="left:124.8px;width:39.9px;"><span class="dot" style="left:15.5px;top:2.59px;background:#4fb561"></span></div>
<div class="c" style="left:165.7px;width:43.3px;"><span class="x" style="left:3.7px;top:3.83px;">2.3</span></div>
<div class="c" style="left:210.0px;width:74.7px;"><span class="x" style="left:3.5px;top:3.83px;">SNS-AB-3</span></div>
<div class="c" style="left:285.7px;width:163.1px;font-weight:bold;"><span class="tg" style="left:23.7px;top:3.09px"><i style="left:1.5px;top:2.95px;width:4px;height:1.1px"></i></span><span class="x" style="left:33.8px;top:3.83px;width:125.2px;">Finalize Operational Layout</span></div>
<div class="c" style="left:449.8px;width:39.7px;"><span class="x" style="left:3.4px;top:3.83px;width:33.1px;">On Track</span></div>
<div class="c" style="left:490.5px;width:42.5px;"></div>
<div class="c" style="left:534.0px;width:40.8px;"><span class="av" style="left:3.4px;top:1.24px;background:#b351c6">M</span><span class="x" style="left:18.7px;top:3.83px;">Maria.</span></div>
</div>
<div class="row " style="top:242.67px;height:14.48px">
<div class="c" style="left:0;width:90.8px"><span class="x num" style="right:64.9px;top:4.35px">31</span></div>
<div class="c" style="left:91.8px;width:32.0px;"></div>
<div class="c" style="left:124.8px;width:39.9px;"><span class="dot" style="left:15.5px;top:2.59px;background:#f6cf2b"></span></div>
<div class="c" style="left:165.7px;width:43.3px;"><span class="x" style="left:3.7px;top:3.35px;">2.3.1</span></div>
<div class="c" style="left:210.0px;width:74.7px;"><span class="x" style="left:3.5px;top:3.35px;">SNS-AB-3-001</span></div>
<div class="c" style="left:285.7px;width:163.1px;"><span class="x" style="left:42.8px;top:3.35px;width:116.2px;">FOL 1</span></div>
<div class="c" style="left:449.8px;width:39.7px;"></div>
<div class="c" style="left:490.5px;width:42.5px;"></div>
<div class="c" style="left:534.0px;width:40.8px;"></div>
</div>
<div class="row " style="top:258.15px;height:14.48px">
<div class="c" style="left:0;width:90.8px"><span class="x num" style="right:64.9px;top:4.87px">32</span></div>
<div class="c" style="left:91.8px;width:32.0px;"></div>
<div class="c" style="left:124.8px;width:39.9px;"><span class="dot" style="left:15.5px;top:2.59px;background:#f6cf2b"></span></div>
<div class="c" style="left:165.7px;width:43.3px;"><span class="x" style="left:3.7px;top:3.87px;">2.3.2</span></div>
<div class="c" style="left:210.0px;width:74.7px;"><span class="x" style="left:3.5px;top:3.87px;">SNS-AB-3-002</span></div>
<div class="c" style="left:285.7px;width:163.1px;"><span class="x" style="left:42.8px;top:3.87px;width:116.2px;">FOL 2</span></div>
<div class="c" style="left:449.8px;width:39.7px;"></div>
<div class="c" style="left:490.5px;width:42.5px;"></div>
<div class="c" style="left:534.0px;width:40.8px;"></div>
</div>
<div class="row " style="top:273.64px;height:14.48px">
<div class="c" style="left:0;width:90.8px"><span class="x num" style="right:64.9px;top:4.38px">33</span></div>
<div class="c" style="left:91.8px;width:32.0px;"></div>
<div class="c" style="left:124.8px;width:39.9px;"><span class="dot" style="left:15.5px;top:2.59px;background:#0f6df2"></span></div>
<div class="c" style="left:165.7px;width:43.3px;"><span class="x" style="left:3.7px;top:3.38px;">2.4</span></div>
<div class="c" style="left:210.0px;width:74.7px;"><span class="x" style="left:3.5px;top:3.38px;">SNS-AB-4</span></div>
<div class="c" style="left:285.7px;width:163.1px;"><span class="x" style="left:33.8px;top:3.38px;width:125.2px;">Confirm Packaging Requirements</span></div>
<div class="c" style="left:449.8px;width:39.7px;"><span class="x" style="left:3.4px;top:3.38px;width:33.1px;">On Track</span></div>
<div class="c" style="left:490.5px;width:42.5px;"></div>
<div class="c" style="left:534.0px;width:40.8px;"><span class="av" style="left:3.4px;top:1.24px;background:#9b5a1d">J</span><span class="x" style="left:18.7px;top:3.38px;">James</span></div>
</div>
<div class="row " style="top:289.12px;height:14.48px">
<div class="c" style="left:0;width:90.8px"><span class="x num" style="right:64.9px;top:4.89px">34</span></div>
<div class="c" style="left:91.8px;width:32.0px;"></div>
<div class="c" style="left:124.8px;width:39.9px;"><span class="dot" style="left:15.5px;top:2.59px;background:#0f6df2"></span></div>
<div class="c" style="left:165.7px;width:43.3px;"><span class="x" style="left:3.7px;top:3.90px;">2.5</span></div>
<div class="c" style="left:210.0px;width:74.7px;"><span class="x" style="left:3.5px;top:3.90px;">SNS-AB-5</span></div>
<div class="c" style="left:285.7px;width:163.1px;"><span class="x" style="left:33.8px;top:3.90px;width:125.2px;">Develop SOPs and Distribute to HR</span></div>
<div class="c" style="left:449.8px;width:39.7px;"><span class="x" style="left:3.4px;top:3.90px;width:33.1px;">On Track</span></div>
<div class="c" style="left:490.5px;width:42.5px;"></div>
<div class="c" style="left:534.0px;width:40.8px;"><span class="av" style="left:3.4px;top:1.24px;background:#3ba556">J</span><span class="x" style="left:18.7px;top:3.90px;">James</span></div>
</div>
<div class="row " style="top:304.61px;height:14.48px">
<div class="c" style="left:0;width:90.8px"><span class="x num" style="right:64.9px;top:4.41px">35</span></div>
<div class="c" style="left:91.8px;width:32.0px;"></div>
<div class="c" style="left:124.8px;width:39.9px;"><span class="dot" style="left:15.5px;top:2.59px;background:#4fb561"></span></div>
<div class="c" style="left:165.7px;width:43.3px;"><span class="x" style="left:3.7px;top:3.41px;">2.6</span></div>
<div class="c" style="left:210.0px;width:74.7px;"><span class="x" style="left:3.5px;top:3.41px;">SNS-AB-6</span></div>
<div class="c" style="left:285.7px;width:163.1px;"><span class="x" style="left:33.8px;top:3.41px;width:125.2px;">Slot SKUs</span></div>
<div class="c" style="left:449.8px;width:39.7px;"><span class="x" style="left:3.4px;top:3.41px;width:33.1px;">On Track</span></div>
<div class="c" style="left:490.5px;width:42.5px;"></div>
<div class="c" style="left:534.0px;width:40.8px;"><span class="av" style="left:3.4px;top:1.24px;background:#ecebe9;overflow:hidden"><span style="position:absolute;left:4.6px;top:1.6px;width:4.6px;height:5px;border-radius:50%;background:#d9a27e"></span><span style="position:absolute;left:4.4px;top:0.6px;width:5.2px;height:2.6px;border-radius:2.6px 2.6px 0 0;background:#5a3d2b"></span><span style="position:absolute;left:3px;top:6.6px;width:8px;height:7px;border-radius:3px 3px 0 0;background:#e9822e"></span><span style="position:absolute;left:0.6px;top:7.6px;width:3.4px;height:5px;border-radius:2px;background:#3c4a5c"></span></span><span class="x" style="left:18.7px;top:3.41px;">juniiipy</span></div>
</div>
<div class="row lb" style="top:320.10px;height:14.48px">
<div class="c" style="left:0;width:90.8px"><span class="x num" style="right:64.9px;top:3.92px">36</span></div>
<div class="c" style="left:91.8px;width:32.0px;"><span class="x" style="left:0.0px;top:3.92px;width:32.0px;text-align:center;">1</span></div>
<div class="c" style="left:124.8px;width:39.9px;"><span class="dot" style="left:15.5px;top:2.59px;background:#f6cf2b"></span></div>
<div class="c" style="left:165.7px;width:43.3px;"><span class="x" style="left:3.7px;top:3.92px;">3</span></div>
<div class="c" style="left:210.0px;width:74.7px;"><span class="x" style="left:3.5px;top:3.92px;">SNS-AC</span></div>
<div class="c" style="left:285.7px;width:163.1px;font-weight:bold;"><span class="tg" style="left:14.4px;top:3.09px"><i style="left:1.5px;top:2.95px;width:4px;height:1.1px"></i></span><span class="x" style="left:24.8px;top:3.92px;width:134.2px;">Systems/IT</span></div>
<div class="c" style="left:449.8px;width:39.7px;font-weight:bold;"><span class="x" style="left:3.4px;top:3.92px;width:33.1px;">High Risk</span></div>
<div class="c" style="left:490.5px;width:42.5px;"><span class="x" style="left:0.0px;top:3.92px;width:42.5px;text-align:center;">Goal</span></div>
<div class="c" style="left:534.0px;width:40.8px;"></div>
</div>
<div class="row " style="top:335.58px;height:14.48px">
<div class="c" style="left:0;width:90.8px"><span class="x num" style="right:64.9px;top:4.44px">37</span></div>
<div class="c" style="left:91.8px;width:32.0px;"></div>
<div class="c" style="left:124.8px;width:39.9px;"><span class="dot" style="left:15.5px;top:2.59px;background:#4fb561"></span></div>
<div class="c" style="left:165.7px;width:43.3px;"><span class="x" style="left:3.7px;top:3.44px;">3.1</span></div>
<div class="c" style="left:210.0px;width:74.7px;"><span class="x" style="left:3.5px;top:3.44px;">SNS-AC-1</span></div>
<div class="c" style="left:285.7px;width:163.1px;"><span class="x" style="left:33.8px;top:3.44px;width:125.2px;">System Development</span></div>
<div class="c" style="left:449.8px;width:39.7px;"><span class="x" style="left:3.4px;top:3.44px;width:33.1px;">High Risk</span></div>
<div class="c" style="left:490.5px;width:42.5px;"></div>
<div class="c" style="left:534.0px;width:40.8px;"><span class="av" style="left:3.4px;top:1.24px;background:#7d8da5">R</span><span class="x" style="left:18.7px;top:3.44px;">Rober</span></div>
</div>
<div class="row " style="top:351.06px;height:14.48px">
<div class="c" style="left:0;width:90.8px"><span class="x num" style="right:64.9px;top:3.96px">38</span></div>
<div class="c" style="left:91.8px;width:32.0px;"></div>
<div class="c" style="left:124.8px;width:39.9px;"><span class="dot" style="left:15.5px;top:2.59px;background:#f6cf2b"></span></div>
<div class="c" style="left:165.7px;width:43.3px;"><span class="x" style="left:3.7px;top:3.96px;">3.2</span></div>
<div class="c" style="left:210.0px;width:74.7px;"><span class="x" style="left:3.5px;top:3.96px;">SNS-AC-2</span></div>
<div class="c" style="left:285.7px;width:163.1px;"><span class="x" style="left:33.8px;top:3.96px;width:125.2px;">Configuration</span></div>
<div class="c" style="left:449.8px;width:39.7px;"><span class="x" style="left:3.4px;top:3.96px;width:33.1px;">High Risk</span></div>
<div class="c" style="left:490.5px;width:42.5px;"><span class="x" style="left:0.0px;top:3.96px;width:42.5px;text-align:center;">Milestone</span></div>
<div class="c" style="left:534.0px;width:40.8px;"><span class="av" style="left:3.4px;top:1.24px;background:#ecebe9;overflow:hidden"><span style="position:absolute;left:4.6px;top:1.6px;width:4.6px;height:5px;border-radius:50%;background:#d9a27e"></span><span style="position:absolute;left:4.4px;top:0.6px;width:5.2px;height:2.6px;border-radius:2.6px 2.6px 0 0;background:#5a3d2b"></span><span style="position:absolute;left:3px;top:6.6px;width:8px;height:7px;border-radius:3px 3px 0 0;background:#e9822e"></span><span style="position:absolute;left:0.6px;top:7.6px;width:3.4px;height:5px;border-radius:2px;background:#3c4a5c"></span></span><span class="x" style="left:18.7px;top:3.96px;">juniiipy</span></div>
</div>
<div class="row " style="top:366.55px;height:14.48px">
<div class="c" style="left:0;width:90.8px"><span class="x num" style="right:64.9px;top:4.47px">39</span></div>
<div class="c" style="left:91.8px;width:32.0px;"></div>
<div class="c" style="left:124.8px;width:39.9px;"><span class="dot" style="left:15.5px;top:2.59px;background:#f6cf2b"></span></div>
<div class="c" style="left:165.7px;width:43.3px;"><span class="x" style="left:3.7px;top:3.47px;">3.3</span></div>
<div class="c" style="left:210.0px;width:74.7px;"><span class="x" style="left:3.5px;top:3.47px;">SNS-AC-3</span></div>
<div class="c" style="left:285.7px;width:163.1px;"><span class="x" style="left:33.8px;top:3.47px;width:125.2px;">Testing Plans &amp; Data Development</span></div>
<div class="c" style="left:449.8px;width:39.7px;"></div>
<div class="c" style="left:490.5px;width:42.5px;"></div>
<div class="c" style="left:534.0px;width:40.8px;"><span class="av" style="left:3.4px;top:1.24px;background:#9b5a1d">J</span><span class="x" style="left:18.7px;top:3.47px;">James</span></div>
</div>
<div class="row " style="top:382.03px;height:14.48px">
<div class="c" style="left:0;width:90.8px"><span class="x num" style="right:64.9px;top:3.99px">40</span></div>
<div class="c" style="left:91.8px;width:32.0px;"></div>
<div class="c" style="left:124.8px;width:39.9px;"><span class="dot" style="left:15.5px;top:2.59px;background:#f6cf2b"></span></div>
<div class="c" style="left:165.7px;width:43.3px;"><span class="x" style="left:3.7px;top:3.99px;">3.4</span></div>
<div class="c" style="left:210.0px;width:74.7px;"><span class="x" style="left:3.5px;top:3.99px;">SNS-AC-4</span></div>
<div class="c" style="left:285.7px;width:163.1px;"><span class="x" style="left:33.8px;top:3.99px;width:125.2px;">UAT Testing</span></div>
<div class="c" style="left:449.8px;width:39.7px;"><span class="x" style="left:3.4px;top:3.99px;width:33.1px;">Med Risk</span></div>
<div class="c" style="left:490.5px;width:42.5px;"></div>
<div class="c" style="left:534.0px;width:40.8px;"><span class="av" style="left:3.4px;top:1.24px;background:#ecebe9;overflow:hidden"><span style="position:absolute;left:4.6px;top:1.6px;width:4.6px;height:5px;border-radius:50%;background:#d9a27e"></span><span style="position:absolute;left:4.4px;top:0.6px;width:5.2px;height:2.6px;border-radius:2.6px 2.6px 0 0;background:#5a3d2b"></span><span style="position:absolute;left:3px;top:6.6px;width:8px;height:7px;border-radius:3px 3px 0 0;background:#e9822e"></span><span style="position:absolute;left:0.6px;top:7.6px;width:3.4px;height:5px;border-radius:2px;background:#3c4a5c"></span></span><span class="x" style="left:18.7px;top:3.99px;">juniiipy</span></div>
</div>
<div class="row " style="top:397.52px;height:14.48px">
<div class="c" style="left:0;width:90.8px"><span class="x num" style="right:64.9px;top:4.50px">41</span></div>
<div class="c" style="left:91.8px;width:32.0px;"></div>
<div class="c" style="left:124.8px;width:39.9px;"><span class="dot" style="left:15.5px;top:2.59px;background:#f6cf2b"></span></div>
<div class="c" style="left:165.7px;width:43.3px;"><span class="x" style="left:3.7px;top:3.50px;">3.5</span></div>
<div class="c" style="left:210.0px;width:74.7px;"><span class="x" style="left:3.5px;top:3.50px;">SNS-AC-5</span></div>
<div class="c" style="left:285.7px;width:163.1px;"><span class="x" style="left:33.8px;top:3.50px;width:125.2px;">Onsite Testing in Northlake MDC</span></div>
<div class="c" style="left:449.8px;width:39.7px;"><span class="x" style="left:3.4px;top:3.50px;width:33.1px;">High Risk</span></div>
<div class="c" style="left:490.5px;width:42.5px;"></div>
<div class="c" style="left:534.0px;width:40.8px;"><span class="av" style="left:3.4px;top:1.24px;background:#b7379c">M</span><span class="x" style="left:18.7px;top:3.50px;">Mary.S</span></div>
</div>
<div class="row " style="top:413.00px;height:14.48px">
<div class="c" style="left:0;width:90.8px"><span class="x num" style="right:64.9px;top:4.02px">42</span></div>
<div class="c" style="left:91.8px;width:32.0px;"></div>
<div class="c" style="left:124.8px;width:39.9px;"><span class="dot" style="left:15.5px;top:2.59px;background:#f6cf2b"></span></div>
<div class="c" style="left:165.7px;width:43.3px;"><span class="x" style="left:3.7px;top:4.02px;">3.6</span></div>
<div class="c" style="left:210.0px;width:74.7px;"><span class="x" style="left:3.5px;top:4.02px;">SNS-AC-6</span></div>
<div class="c" style="left:285.7px;width:163.1px;"><span class="x" style="left:33.8px;top:4.02px;width:125.2px;">System/IT complete</span></div>
<div class="c" style="left:449.8px;width:39.7px;"></div>
<div class="c" style="left:490.5px;width:42.5px;"></div>
<div class="c" style="left:534.0px;width:40.8px;"><span class="av" style="left:3.4px;top:1.24px;background:#ecebe9;overflow:hidden"><span style="position:absolute;left:4.6px;top:1.6px;width:4.6px;height:5px;border-radius:50%;background:#d9a27e"></span><span style="position:absolute;left:4.4px;top:0.6px;width:5.2px;height:2.6px;border-radius:2.6px 2.6px 0 0;background:#5a3d2b"></span><span style="position:absolute;left:3px;top:6.6px;width:8px;height:7px;border-radius:3px 3px 0 0;background:#e9822e"></span><span style="position:absolute;left:0.6px;top:7.6px;width:3.4px;height:5px;border-radius:2px;background:#3c4a5c"></span></span><span class="x" style="left:18.7px;top:4.02px;">juniiipy</span></div>
</div>
<div class="row lb" style="top:428.49px;height:14.48px">
<div class="c" style="left:0;width:90.8px"><span class="x num" style="right:64.9px;top:4.53px">43</span></div>
<div class="c" style="left:91.8px;width:32.0px;"><span class="x" style="left:0.0px;top:3.53px;width:32.0px;text-align:center;">1</span></div>
<div class="c" style="left:124.8px;width:39.9px;"><span class="dot" style="left:15.5px;top:2.59px;background:#f6cf2b"></span></div>
<div class="c" style="left:165.7px;width:43.3px;"><span class="x" style="left:3.7px;top:3.53px;">4</span></div>
<div class="c" style="left:210.0px;width:74.7px;"><span class="x" style="left:3.5px;top:3.53px;">SNS-AD</span></div>
<div class="c" style="left:285.7px;width:163.1px;font-weight:bold;"><span class="tg" style="left:14.4px;top:3.09px"><i style="left:1.5px;top:2.95px;width:4px;height:1.1px"></i></span><span class="x" style="left:24.8px;top:3.53px;width:134.2px;">HR &amp; Communication</span></div>
<div class="c" style="left:449.8px;width:39.7px;font-weight:bold;"><span class="x" style="left:3.4px;top:3.53px;width:33.1px;">On Track</span></div>
<div class="c" style="left:490.5px;width:42.5px;"></div>
<div class="c" style="left:534.0px;width:40.8px;"></div>
</div>
<div class="row " style="top:443.98px;height:14.48px">
<div class="c" style="left:0;width:90.8px"><span class="x num" style="right:64.9px;top:4.04px">44</span></div>
<div class="c" style="left:91.8px;width:32.0px;"></div>
<div class="c" style="left:124.8px;width:39.9px;"><span class="dot" style="left:15.5px;top:2.59px;background:#0f6df2"></span></div>
<div class="c" style="left:165.7px;width:43.3px;"><span class="x" style="left:3.7px;top:4.04px;">4.1</span></div>
<div class="c" style="left:210.0px;width:74.7px;"><span class="x" style="left:3.5px;top:4.04px;">SNS-AD-1</span></div>
<div class="c" style="left:285.7px;width:163.1px;"><span class="x" style="left:33.8px;top:4.04px;width:125.2px;">Finalize Staffing Plan (Phase I)</span></div>
<div class="c" style="left:449.8px;width:39.7px;"><span class="x" style="left:3.4px;top:4.04px;width:33.1px;">On Track</span></div>
<div class="c" style="left:490.5px;width:42.5px;"></div>
<div class="c" style="left:534.0px;width:40.8px;"><span class="av" style="left:3.4px;top:1.24px;background:#3ba556">J</span><span class="x" style="left:18.7px;top:4.04px;">James</span></div>
</div>
<div class="row " style="top:459.46px;height:14.48px">
<div class="c" style="left:0;width:90.8px"><span class="x num" style="right:64.9px;top:4.56px">45</span></div>
<div class="c" style="left:91.8px;width:32.0px;"></div>
<div class="c" style="left:124.8px;width:39.9px;"><span class="dot" style="left:15.5px;top:2.59px;background:#4fb561"></span></div>
<div class="c" style="left:165.7px;width:43.3px;"><span class="x" style="left:3.7px;top:3.56px;">4.2</span></div>
<div class="c" style="left:210.0px;width:74.7px;"><span class="x" style="left:3.5px;top:3.56px;">SNS-AD-2</span></div>
<div class="c" style="left:285.7px;width:163.1px;"><span class="x" style="left:33.8px;top:3.56px;width:125.2px;">Finalize Inbound Learning Materials</span></div>
<div class="c" style="left:449.8px;width:39.7px;"></div>
<div class="c" style="left:490.5px;width:42.5px;"></div>
<div class="c" style="left:534.0px;width:40.8px;"><span class="av" style="left:3.4px;top:1.24px;background:#f9a24f">M</span><span class="x" style="left:18.7px;top:3.56px;">Micha</span></div>
</div>
<div class="abs" style="left:587.6px;top:5.4px;width:2px;height:470px;background:linear-gradient(90deg,rgba(120,120,120,0),rgba(120,120,120,.16))"></div>
<div class="abs" style="left:589.4px;top:5.4px;width:1.2px;height:470px;background:#c8c8c8"></div>
<div class="t" style="left:608.5px;width:20px;text-align:center;top:10.00px;font-size:7.9px;font-weight:bold;color:#444;letter-spacing:0.45px">Q4</div>
<div class="t" style="left:664.8px;width:20px;text-align:center;top:10.00px;font-size:7.9px;font-weight:bold;color:#444;letter-spacing:0.45px">Q1</div>
<div class="vl" style="left:646.3px;top:28.6px;height:11.6px;background:#d2d2d2"></div>
<div class="t" style="left:720.8px;width:20px;text-align:center;top:10.00px;font-size:7.9px;font-weight:bold;color:#444;letter-spacing:0.45px">Q2</div>
<div class="vl" style="left:702.0px;top:28.6px;height:11.6px;background:#d2d2d2"></div>
<div class="t" style="left:777.4px;width:20px;text-align:center;top:10.00px;font-size:7.9px;font-weight:bold;color:#444;letter-spacing:0.45px">Q3</div>
<div class="vl" style="left:758.3px;top:28.6px;height:11.6px;background:#d2d2d2"></div>
<div class="t" style="left:834.3px;width:20px;text-align:center;top:10.00px;font-size:7.9px;font-weight:bold;color:#444;letter-spacing:0.45px">Q4</div>
<div class="vl" style="left:815.2px;top:28.6px;height:11.6px;background:#d2d2d2"></div>
<div class="abs" style="left:590.6px;top:18px;width:277.4px;height:14px;overflow:hidden">
<div class="t" style="left:-1.0px;width:20px;text-align:center;top:4.00px;font-size:8.1px;color:#555;letter-spacing:0.1px">Oct</div>
<div class="t" style="left:17.9px;width:20px;text-align:center;top:4.00px;font-size:8.1px;color:#555;letter-spacing:0.1px">Nov</div>
<div class="t" style="left:36.7px;width:20px;text-align:center;top:4.00px;font-size:8.1px;color:#555;letter-spacing:0.1px">Dec</div>
<div class="t" style="left:55.9px;width:20px;text-align:center;top:4.00px;font-size:8.1px;color:#555;letter-spacing:0.1px">Jan</div>
<div class="t" style="left:74.2px;width:20px;text-align:center;top:4.00px;font-size:8.1px;color:#555;letter-spacing:0.1px">Feb</div>
<div class="t" style="left:92.4px;width:20px;text-align:center;top:4.00px;font-size:8.1px;color:#555;letter-spacing:0.1px">Mar</div>
<div class="t" style="left:111.3px;width:20px;text-align:center;top:4.00px;font-size:8.1px;color:#555;letter-spacing:0.1px">Apr</div>
<div class="t" style="left:130.2px;width:20px;text-align:center;top:4.00px;font-size:8.1px;color:#555;letter-spacing:0.1px">May</div>
<div class="t" style="left:149.0px;width:20px;text-align:center;top:4.00px;font-size:8.1px;color:#555;letter-spacing:0.1px">Jun</div>
<div class="t" style="left:167.9px;width:20px;text-align:center;top:4.00px;font-size:8.1px;color:#555;letter-spacing:0.1px">Jul</div>
<div class="t" style="left:187.1px;width:20px;text-align:center;top:4.00px;font-size:8.1px;color:#555;letter-spacing:0.1px">Aug</div>
<div class="t" style="left:205.9px;width:20px;text-align:center;top:4.00px;font-size:8.1px;color:#555;letter-spacing:0.1px">Sep</div>
<div class="t" style="left:224.8px;width:20px;text-align:center;top:4.00px;font-size:8.1px;color:#555;letter-spacing:0.1px">Oct</div>
<div class="t" style="left:243.7px;width:20px;text-align:center;top:4.00px;font-size:8.1px;color:#555;letter-spacing:0.1px">Nov</div>
<div class="t" style="left:262.6px;width:20px;text-align:center;top:4.00px;font-size:8.1px;color:#555;letter-spacing:0.1px">Dec</div>
</div>
<svg class="abs" style="left:858.8px;top:33.3px" width="6" height="6" viewBox="0 0 6 6"><path d="M.8 .8l4.2 4.2M5 .8L.8 5" stroke="#2a2a2a" stroke-width=".95"/></svg>
<div class="abs" style="left:858.4px;top:39.5px;width:9.6px;height:1px;background:#5272b0;z-index:2"></div>
<svg class="abs" style="left:590.6px;top:40.2px" width="267.8" height="435" viewBox="0 0 267.8 435"><path d="M18.3 47.4v14.485M18.3 62.8v14.485M18.3 78.3v14.485M18.3 93.8v14.485M18.3 109.3v14.485M18.3 124.8v14.485M18.3 155.8v14.485M18.3 171.2v14.485M18.3 202.2v14.485M18.3 217.7v14.485M18.3 233.2v14.485M18.3 248.7v14.485M18.3 264.1v14.485M18.3 295.1v14.485M18.3 310.6v14.485M18.3 326.1v14.485M18.3 341.6v14.485M18.3 357.1v14.485M18.3 372.5v14.485M18.3 403.5v14.485M18.3 419.0v14.485M36.8 47.4v14.485M36.8 62.8v14.485M36.8 78.3v14.485M36.8 93.8v14.485M36.8 109.3v14.485M36.8 124.8v14.485M36.8 155.8v14.485M36.8 171.2v14.485M36.8 202.2v14.485M36.8 217.7v14.485M36.8 233.2v14.485M36.8 248.7v14.485M36.8 264.1v14.485M36.8 295.1v14.485M36.8 310.6v14.485M36.8 326.1v14.485M36.8 341.6v14.485M36.8 357.1v14.485M36.8 372.5v14.485M36.8 403.5v14.485M36.8 419.0v14.485M75.2 47.4v14.485M75.2 62.8v14.485M75.2 78.3v14.485M75.2 93.8v14.485M75.2 109.3v14.485M75.2 124.8v14.485M75.2 155.8v14.485M75.2 171.2v14.485M75.2 202.2v14.485M75.2 217.7v14.485M75.2 233.2v14.485M75.2 248.7v14.485M75.2 264.1v14.485M75.2 295.1v14.485M75.2 310.6v14.485M75.2 326.1v14.485M75.2 341.6v14.485M75.2 357.1v14.485M75.2 372.5v14.485M75.2 403.5v14.485M75.2 419.0v14.485M92.5 47.4v14.485M92.5 62.8v14.485M92.5 78.3v14.485M92.5 93.8v14.485M92.5 109.3v14.485M92.5 124.8v14.485M92.5 155.8v14.485M92.5 171.2v14.485M92.5 202.2v14.485M92.5 217.7v14.485M92.5 233.2v14.485M92.5 248.7v14.485M92.5 264.1v14.485M92.5 295.1v14.485M92.5 310.6v14.485M92.5 326.1v14.485M92.5 341.6v14.485M92.5 357.1v14.485M92.5 372.5v14.485M92.5 403.5v14.485M92.5 419.0v14.485M130.3 47.4v14.485M130.3 62.8v14.485M130.3 78.3v14.485M130.3 93.8v14.485M130.3 109.3v14.485M130.3 124.8v14.485M130.3 155.8v14.485M130.3 171.2v14.485M130.3 202.2v14.485M130.3 217.7v14.485M130.3 233.2v14.485M130.3 248.7v14.485M130.3 264.1v14.485M130.3 295.1v14.485M130.3 310.6v14.485M130.3 326.1v14.485M130.3 341.6v14.485M130.3 357.1v14.485M130.3 372.5v14.485M130.3 403.5v14.485M130.3 419.0v14.485M149.4 47.4v14.485M149.4 62.8v14.485M149.4 78.3v14.485M149.4 93.8v14.485M149.4 109.3v14.485M149.4 124.8v14.485M149.4 155.8v14.485M149.4 171.2v14.485M149.4 202.2v14.485M149.4 217.7v14.485M149.4 233.2v14.485M149.4 248.7v14.485M149.4 264.1v14.485M149.4 295.1v14.485M149.4 310.6v14.485M149.4 326.1v14.485M149.4 341.6v14.485M149.4 357.1v14.485M149.4 372.5v14.485M149.4 403.5v14.485M149.4 419.0v14.485M187.2 47.4v14.485M187.2 62.8v14.485M187.2 78.3v14.485M187.2 93.8v14.485M187.2 109.3v14.485M187.2 124.8v14.485M187.2 155.8v14.485M187.2 171.2v14.485M187.2 202.2v14.485M187.2 217.7v14.485M187.2 233.2v14.485M187.2 248.7v14.485M187.2 264.1v14.485M187.2 295.1v14.485M187.2 310.6v14.485M187.2 326.1v14.485M187.2 341.6v14.485M187.2 357.1v14.485M187.2 372.5v14.485M187.2 403.5v14.485M187.2 419.0v14.485M206.4 47.4v14.485M206.4 62.8v14.485M206.4 78.3v14.485M206.4 93.8v14.485M206.4 109.3v14.485M206.4 124.8v14.485M206.4 155.8v14.485M206.4 171.2v14.485M206.4 202.2v14.485M206.4 217.7v14.485M206.4 233.2v14.485M206.4 248.7v14.485M206.4 264.1v14.485M206.4 295.1v14.485M206.4 310.6v14.485M206.4 326.1v14.485M206.4 341.6v14.485M206.4 357.1v14.485M206.4 372.5v14.485M206.4 403.5v14.485M206.4 419.0v14.485M244.1 47.4v14.485M244.1 62.8v14.485M244.1 78.3v14.485M244.1 93.8v14.485M244.1 109.3v14.485M244.1 124.8v14.485M244.1 155.8v14.485M244.1 171.2v14.485M244.1 202.2v14.485M244.1 217.7v14.485M244.1 233.2v14.485M244.1 248.7v14.485M244.1 264.1v14.485M244.1 295.1v14.485M244.1 310.6v14.485M244.1 326.1v14.485M244.1 341.6v14.485M244.1 357.1v14.485M244.1 372.5v14.485M244.1 403.5v14.485M244.1 419.0v14.485M262.7 47.4v14.485M262.7 62.8v14.485M262.7 78.3v14.485M262.7 93.8v14.485M262.7 109.3v14.485M262.7 124.8v14.485M262.7 155.8v14.485M262.7 171.2v14.485M262.7 202.2v14.485M262.7 217.7v14.485M262.7 233.2v14.485M262.7 248.7v14.485M262.7 264.1v14.485M262.7 295.1v14.485M262.7 310.6v14.485M262.7 326.1v14.485M262.7 341.6v14.485M262.7 357.1v14.485M262.7 372.5v14.485M262.7 403.5v14.485M262.7 419.0v14.485" stroke="#f0f0f0" stroke-width="1"/><path d="M56.0 47.4v14.485M56.0 62.8v14.485M56.0 78.3v14.485M56.0 93.8v14.485M56.0 109.3v14.485M56.0 124.8v14.485M56.0 155.8v14.485M56.0 171.2v14.485M56.0 202.2v14.485M56.0 217.7v14.485M56.0 233.2v14.485M56.0 248.7v14.485M56.0 264.1v14.485M56.0 295.1v14.485M56.0 310.6v14.485M56.0 326.1v14.485M56.0 341.6v14.485M56.0 357.1v14.485M56.0 372.5v14.485M56.0 403.5v14.485M56.0 419.0v14.485M111.7 47.4v14.485M111.7 62.8v14.485M111.7 78.3v14.485M111.7 93.8v14.485M111.7 109.3v14.485M111.7 124.8v14.485M111.7 155.8v14.485M111.7 171.2v14.485M111.7 202.2v14.485M111.7 217.7v14.485M111.7 233.2v14.485M111.7 248.7v14.485M111.7 264.1v14.485M111.7 295.1v14.485M111.7 310.6v14.485M111.7 326.1v14.485M111.7 341.6v14.485M111.7 357.1v14.485M111.7 372.5v14.485M111.7 403.5v14.485M111.7 419.0v14.485M168.0 47.4v14.485M168.0 62.8v14.485M168.0 78.3v14.485M168.0 93.8v14.485M168.0 109.3v14.485M168.0 124.8v14.485M168.0 155.8v14.485M168.0 171.2v14.485M168.0 202.2v14.485M168.0 217.7v14.485M168.0 233.2v14.485M168.0 248.7v14.485M168.0 264.1v14.485M168.0 295.1v14.485M168.0 310.6v14.485M168.0 326.1v14.485M168.0 341.6v14.485M168.0 357.1v14.485M168.0 372.5v14.485M168.0 403.5v14.485M168.0 419.0v14.485M224.9 47.4v14.485M224.9 62.8v14.485M224.9 78.3v14.485M224.9 93.8v14.485M224.9 109.3v14.485M224.9 124.8v14.485M224.9 155.8v14.485M224.9 171.2v14.485M224.9 202.2v14.485M224.9 217.7v14.485M224.9 233.2v14.485M224.9 248.7v14.485M224.9 264.1v14.485M224.9 295.1v14.485M224.9 310.6v14.485M224.9 326.1v14.485M224.9 341.6v14.485M224.9 357.1v14.485M224.9 372.5v14.485M224.9 403.5v14.485M224.9 419.0v14.485" stroke="#e0e0e0" stroke-width="1"/><defs><linearGradient id="pg" x1="0" y1="0" x2="0" y2="1"><stop offset="0" stop-color="#bdbdbd"/><stop offset=".5" stop-color="#cfcfcf"/><stop offset="1" stop-color="#b8b8b8"/></linearGradient><linearGradient id="pw" x1="0" y1="0" x2="0" y2="1"><stop offset="0" stop-color="#dcdcdc"/><stop offset=".45" stop-color="#fafafa"/><stop offset="1" stop-color="#d4d4d4"/></linearGradient></defs><rect x="51.1" y="4.5" width="2.3" height="8.3" fill="url(#pw)"/><rect x="51.5" y="20.2" width="216.0" height="6.2" fill="#cacaca" stroke="#b4b4b4" stroke-width=".6"/><path d="M51.2 26.7v1.3h1.2v-1.3zM266.6 26.7v1.3h1.2v-1.3z" fill="#b8b8b8"/><rect x="52.0" y="21.4" width="115.9" height="3.7" fill="#eeeeee"/><rect x="51.5" y="35.7" width="19.6" height="6.2" fill="#cacaca" stroke="#b4b4b4" stroke-width=".6"/><path d="M51.2 42.2v1.3h1.2v-1.3zM70.2 42.2v1.3h1.2v-1.3z" fill="#b8b8b8"/><rect x="52.0" y="36.9" width="19.0" height="3.7" fill="#eeeeee"/><rect x="51.6" y="51.1" width="1.2" height="7.2" fill="#d2e7f8" stroke="#a3c6e4" stroke-width=".7"/><rect x="52.1" y="66.5" width="3.0" height="7.2" fill="#d2e7f8" stroke="#a3c6e4" stroke-width=".7"/><rect x="52.0" y="82.0" width="17.1" height="7.2" fill="#d2e7f8" stroke="#a3c6e4" stroke-width=".7"/><rect x="51.7" y="97.5" width="2.4" height="7.2" fill="#d2e7f8" stroke="#a3c6e4" stroke-width=".7"/><rect x="52.0" y="113.0" width="15.5" height="7.2" fill="#d2e7f8" stroke="#a3c6e4" stroke-width=".7"/><rect x="71.5" y="128.5" width="1.2" height="7.2" fill="#d2e7f8" stroke="#a3c6e4" stroke-width=".7"/><rect x="72.1" y="144.1" width="47.4" height="6.2" fill="#cacaca" stroke="#b4b4b4" stroke-width=".6"/><path d="M71.8 150.6v1.3h1.2v-1.3zM118.6 150.6v1.3h1.2v-1.3z" fill="#b8b8b8"/><rect x="72.6" y="145.3" width="28.3" height="3.7" fill="#eeeeee"/><rect x="71.7" y="159.4" width="33.6" height="7.2" fill="#d2e7f8" stroke="#a3c6e4" stroke-width=".7"/><rect x="73.0" y="161.4" width="16.0" height="3.4" fill="#eaf4fc" stroke="#a3c6e4" stroke-width=".6"/><rect x="71.7" y="174.9" width="4.9" height="7.2" fill="#d2e7f8" stroke="#a3c6e4" stroke-width=".7"/><rect x="107.0" y="190.4" width="1.8" height="7" fill="#bdbdbd"/><rect x="107.1" y="205.9" width="1.4" height="7.2" fill="#d2e7f8" stroke="#a3c6e4" stroke-width=".7"/><rect x="107.3" y="221.4" width="1.4" height="7.2" fill="#d2e7f8" stroke="#a3c6e4" stroke-width=".7"/><rect x="108.0" y="236.9" width="3.6" height="7.2" fill="#d2e7f8" stroke="#a3c6e4" stroke-width=".7"/><rect x="112.9" y="252.4" width="6.0" height="7.2" fill="#d2e7f8" stroke="#a3c6e4" stroke-width=".7"/><rect x="120.2" y="283.4" width="112.5" height="6.2" fill="#cacaca" stroke="#b4b4b4" stroke-width=".6"/><path d="M119.9 289.9v1.3h1.2v-1.3zM231.8 289.9v1.3h1.2v-1.3z" fill="#b8b8b8"/><rect x="120.7" y="284.6" width="54.1" height="3.7" fill="#eeeeee"/><rect x="120.2" y="298.8" width="51.0" height="7.2" fill="#d2e7f8" stroke="#a3c6e4" stroke-width=".7"/><rect x="121.0" y="300.8" width="37.9" height="3.4" fill="#eaf4fc" stroke="#a3c6e4" stroke-width=".6"/><rect x="172.1" y="314.3" width="7.2" height="7.2" fill="#d2e7f8" stroke="#a3c6e4" stroke-width=".7"/><rect x="179.9" y="329.8" width="1.2" height="7.2" fill="#d2e7f8" stroke="#a3c6e4" stroke-width=".7"/><rect x="180.8" y="345.3" width="24.6" height="7.2" fill="#d2e7f8" stroke="#a3c6e4" stroke-width=".7"/><rect x="181.4" y="347.3" width="9.6" height="3.4" fill="#eaf4fc" stroke="#a3c6e4" stroke-width=".6"/><rect x="206.9" y="360.8" width="24.6" height="7.2" fill="#d2e7f8" stroke="#a3c6e4" stroke-width=".7"/><rect x="207.4" y="362.8" width="3.2" height="3.4" fill="#eaf4fc" stroke="#a3c6e4" stroke-width=".6"/><rect x="232.7" y="376.2" width="1.2" height="7.2" fill="#d2e7f8" stroke="#a3c6e4" stroke-width=".7"/><rect x="233.3" y="391.8" width="34.2" height="6.2" fill="#cacaca" stroke="#b4b4b4" stroke-width=".6"/><path d="M233.0 398.3v1.3h1.2v-1.3zM266.6 398.3v1.3h1.2v-1.3z" fill="#b8b8b8"/><rect x="233.8" y="393.0" width="10.9" height="3.7" fill="#eeeeee"/><rect x="233.3" y="407.2" width="25.2" height="7.2" fill="#d2e7f8" stroke="#a3c6e4" stroke-width=".7"/><rect x="233.8" y="409.2" width="24.2" height="3.4" fill="#eaf4fc" stroke="#a3c6e4" stroke-width=".6"/><rect x="233.3" y="422.7" width="7.8" height="7.2" fill="#d2e7f8" stroke="#a3c6e4" stroke-width=".7"/><path d="M53.1 57.0 L54.1 59.0 L54.1 110.8" fill="none" stroke="#2e2e2e" stroke-width=".8"/><path d="M52.6 63.9h3l-1.5 2.4z" fill="#2e2e2e"/><path d="M52.6 79.4h3l-1.5 2.4z" fill="#2e2e2e"/><path d="M52.6 94.9h3l-1.5 2.4z" fill="#2e2e2e"/><path d="M52.6 110.4h3l-1.5 2.4z" fill="#2e2e2e"/><path d="M69.4 87.8 L72.6 87.8 L72.6 127.5" fill="none" stroke="#2e2e2e" stroke-width=".8"/><path d="M67.8 118.8 L72.6 118.8" fill="none" stroke="#9a9a9a" stroke-width=".8"/><path d="M71.1 125.5h3l-1.5 2.4z" fill="#2e2e2e"/><path d="M73.0 135.3 L74.6 135.3 L74.0 136.9 L74.0 173.9" fill="none" stroke="#2e2e2e" stroke-width=".8"/><path d="M72.5 156.6h3l-1.5 2.4z" fill="#2e2e2e"/><path d="M72.5 172.1h3l-1.5 2.4z" fill="#2e2e2e"/><path d="M76.9 181.1 L108.0 181.1" fill="none" stroke="#9a9a9a" stroke-width=".8"/><path d="M105.6 165.2 L108.0 165.2 L108.0 189.4" fill="none" stroke="#2e2e2e" stroke-width=".8"/><path d="M106.5 187.6h3l-1.5 2.4z" fill="#2e2e2e"/><path d="M108.8 195.8 L110.2 195.8 L109.8 197.8 L109.8 235.9" fill="none" stroke="#2e2e2e" stroke-width=".8"/><path d="M108.1 202.9h3l-1.5 2.4z" fill="#2e2e2e"/><path d="M108.1 218.6h3l-1.5 2.4z" fill="#2e2e2e"/><path d="M108.3 234.1h3l-1.5 2.4z" fill="#2e2e2e"/><path d="M111.9 242.7 L115.0 242.7 L115.0 251.4" fill="none" stroke="#2e2e2e" stroke-width=".8"/><path d="M113.5 249.6h3l-1.5 2.4z" fill="#2e2e2e"/><path d="M119.2 258.2 L121.2 258.2 L121.2 297.8" fill="none" stroke="#2e2e2e" stroke-width=".8"/><path d="M119.7 296.0h3l-1.5 2.4z" fill="#2e2e2e"/><path d="M171.5 304.6 L173.8 304.6 L173.8 313.3" fill="none" stroke="#2e2e2e" stroke-width=".8"/><path d="M172.3 311.5h3l-1.5 2.4z" fill="#2e2e2e"/><path d="M179.6 320.1 L181.8 320.1 L181.8 328.8" fill="none" stroke="#2e2e2e" stroke-width=".8"/><path d="M180.3 327.0h3l-1.5 2.4z" fill="#2e2e2e"/><path d="M181.4 335.6 L183.0 335.6 L183.0 341.9 L182.0 342.9" fill="none" stroke="#2e2e2e" stroke-width=".8"/><path d="M180.5 342.5h3l-1.5 2.4z" fill="#2e2e2e"/><path d="M205.7 351.1 L208.6 351.1 L208.6 359.8" fill="none" stroke="#2e2e2e" stroke-width=".8"/><path d="M207.1 358.0h3l-1.5 2.4z" fill="#2e2e2e"/><path d="M231.8 366.6 L234.0 366.6 L234.0 375.2" fill="none" stroke="#2e2e2e" stroke-width=".8"/><path d="M232.5 373.4h3l-1.5 2.4z" fill="#2e2e2e"/><path d="M234.0 382.0 L235.8 382.0 L235.2 383.6 L235.2 433.6" fill="none" stroke="#2e2e2e" stroke-width=".8"/><path d="M233.7 404.4h3l-1.5 2.4z" fill="#2e2e2e"/><path d="M233.7 419.9h3l-1.5 2.4z" fill="#2e2e2e"/><path d="M258.8 413.0 L261.6 413.0 L261.6 433.6" fill="none" stroke="#2e2e2e" stroke-width=".8"/><path d="M241.4 428.5 L244.0 428.5 L244.0 433.6" fill="none" stroke="#2e2e2e" stroke-width=".8"/></svg>
<div class="abs" style="left:590.6px;top:40.2px;width:267.8px;height:435px;overflow:hidden">
<div class="gl" style="left:61.8px;top:3.82px;color:#1b2a5c;">Summary</div>
<div class="gl" style="left:74.9px;top:34.82px;color:#2c3e55;">Pre-Work</div>
<div class="gl" style="left:55.9px;top:49.82px;">Kick Off Meeting</div>
<div class="gl" style="left:59.7px;top:65.82px;">Identify Key Stakeholders</div>
<div class="gl" style="left:73.3px;top:80.82px;">Define Budget</div>
<div class="gl" style="left:58.2px;top:96.82px;">Evaluate Lab Ops Blackout Calendar</div>
<div class="gl" style="left:71.4px;top:111.82px;">Develop Critical Path &amp; Visual</div>
<div class="gl" style="left:76.0px;top:126.82px;">Schedule Bi-Weekly Workstream Meetings</div>
<div class="gl" style="left:123.3px;top:142.82px;color:#2c3e55;">Operations</div>
<div class="gl" style="left:109.2px;top:157.82px;">Determine Implementation &amp; Go-Live Support</div>
<div class="gl" style="left:79.9px;top:173.82px;">Determine MHE Needs</div>
<div class="gl" style="left:116.8px;top:188.82px;">Finalize Operational Layout</div>
<div class="gl" style="left:111.0px;top:204.82px;">FOL 1</div>
<div class="gl" style="left:111.9px;top:219.82px;">FOL 2</div>
<div class="gl" style="left:115.6px;top:235.82px;">Confirm Packaging Requirements and Types of Packaging</div>
<div class="gl" style="left:123.1px;top:250.82px;">Develop SOPs and Distribute to HR for Learning</div>
<div class="gl" style="left:236.0px;top:281.82px;color:#2c3e55;">Systems/IT</div>
<div class="gl" style="left:175.4px;top:297.82px;">System Development</div>
<div class="gl" style="left:183.2px;top:312.82px;">Configuration</div>
<div class="gl" style="left:185.3px;top:328.82px;">Testing Plans &amp; Data Development</div>
<div class="gl" style="left:209.3px;top:343.82px;">UAT Testing</div>
<div class="gl" style="left:235.4px;top:359.82px;">Onsite Testing in Northlake MDC</div>
<div class="gl" style="left:237.8px;top:374.82px;">System/IT complete</div>
<div class="gl" style="left:261.8px;top:405.82px;">Finalize Staffing Plan (Phase I)</div>
<div class="gl" style="left:245.0px;top:421.82px;">Finalize Inbound Learning Materials</div>
</div>
<div class="abs" style="left:858.4px;top:40.2px;width:9.300000000000068px;height:435px;background:#fff"></div>
<div class="abs" style="left:861.3px;top:44.2px;width:4.8px;height:206px;border-radius:2.4px;background:#a9a9a9"></div>
</div>
<div id="panel" class="abs" style="left:867.7px;top:88.2px;width:132.29999999999995px;height:475px;background:#fff;border-left:1px solid #d4d4d4;box-shadow:-1px 0 2px rgba(0,0,0,.08)"></div>
<div class="t" style="left:883.5px;top:105px;font-size:15.7px;color:#111;font-weight:bold;letter-spacing:-0.38px;">Sheet Summary</div>
<div class="t" style="left:881.3px;top:141px;font-size:8.15px;color:#2a2a2a;font-weight:bold;">Project Name</div>
<div class="t" style="left:939.8px;top:139.9px;font-size:8.4px;font-style:italic;color:#777;font-family:'Liberation Serif',serif">f<span style="font-size:72%">x</span></div>
<div class="inp" style="left:881.2px;top:154.50px;width:130px;"></div>
<div class="t" style="left:883.4px;top:162px;font-size:8.0px;color:#333;letter-spacing:0.02px;">Increase SNS presence in the J...</div>
<div class="t" style="left:881.3px;top:189px;font-size:8.15px;color:#2a2a2a;font-weight:bold;">Start Date</div>
<div class="t" style="left:927.2px;top:187.15px;font-size:8.4px;font-style:italic;color:#777;font-family:'Liberation Serif',serif">f<span style="font-size:72%">x</span></div>
<div class="inp" style="left:881.2px;top:202.05px;width:74.4px;height:20.2px;"></div>
<div class="t" style="left:883.4px;top:209px;font-size:8.5px;color:#333;letter-spacing:0.02px;">12/23/21</div>
<svg class="abs" style="left:943.8px;top:206.9px" width="8" height="8.4" viewBox="0 0 8 8.4"><rect x="0" y=".4" width="8" height="8" rx=".8" fill="#1a73e8"/><path d="M2.3 0v1.6M5.7 0v1.6" stroke="#1a73e8" stroke-width="1"/><path d="M1.6 3.2h1.2v1H1.6zM3.4 3.2h1.2v1H3.4zM5.2 3.2h1.2v1H5.2zM1.6 5.2h1.2v1H1.6zM3.4 5.2h1.2v1H3.4zM5.2 5.2h1.2v1H5.2z" fill="#fff"/></svg>
<div class="t" style="left:881.3px;top:236px;font-size:8.15px;color:#2a2a2a;font-weight:bold;">Skip Parents</div>
<div class="inp" style="left:881.2px;top:249.20px;width:130px;"></div>
<div class="t" style="left:883.4px;top:257px;font-size:8.0px;color:#333;letter-spacing:0.02px;">1</div>
<div class="t" style="left:881.3px;top:283px;font-size:8.15px;color:#2a2a2a;font-weight:bold;">Skip Top Parent</div>
<div class="abs" style="left:881.8px;top:296.8px;width:8.6px;height:8.6px;border-radius:1.4px;background:#0b6ef6"></div>
<svg class="abs" style="left:881.8px;top:296.8px" width="8.6" height="8.6" viewBox="0 0 8.6 8.6"><path d="M2 4.4l1.7 1.7L6.7 2.7" fill="none" stroke="#fff" stroke-width="1.2"/></svg>
<div class="t" style="left:881.3px;top:320px;font-size:8.15px;color:#2a2a2a;font-weight:bold;">Prefix</div>
<div class="inp" style="left:881.2px;top:333.50px;width:130px;"></div>
<div class="t" style="left:883.4px;top:341px;font-size:8.0px;color:#333;letter-spacing:0.02px;">SNS-</div>
<div class="t" style="left:881.3px;top:367px;font-size:8.15px;color:#2a2a2a;font-weight:bold;">SQ1</div>
<div class="inp" style="left:881.2px;top:380.75px;width:130px;"></div>
<div class="t" style="left:883.4px;top:388px;font-size:8.0px;color:#333;letter-spacing:0.02px;">Upper</div>
<div class="t" style="left:881.3px;top:415px;font-size:8.15px;color:#2a2a2a;font-weight:bold;">LN1</div>
<div class="inp" style="left:881.2px;top:428.00px;width:130px;"></div>
<div class="t" style="left:883.4px;top:436px;font-size:8.0px;color:#333;letter-spacing:0.02px;">2</div>
<div class="t" style="left:881.3px;top:462px;font-size:8.15px;color:#2a2a2a;font-weight:bold;">SP1</div>
<div class="inp" style="left:881.2px;top:475.25px;width:130px;"></div>
<div class="t" style="left:883.4px;top:483px;font-size:8.0px;color:#333;letter-spacing:0.02px;">-</div>
<div class="t" style="left:881.3px;top:509px;font-size:8.15px;color:#2a2a2a;font-weight:bold;">SQ2</div>
<div class="inp" style="left:881.2px;top:522.50px;width:130px;"></div>
<div class="abs" style="left:881.2px;top:534.6px;width:130px;height:23.4px;border:1px solid #3b82e6;border-radius:2px;background:#fff"></div>
<div class="t" style="left:965.4px;top:543px;font-size:8.3px;color:#2b72d6;letter-spacing:0.1px;">+ New Field</div>
<svg class="abs" style="left:0;top:0;pointer-events:none;z-index:10" width="1000" height="563" viewBox="0 0 1000 563"><rect x="175.60" y="89.50" width="118.30" height="317.70" rx="12.90" fill="none" stroke="#ff7f27" stroke-width="5.2"/></svg>
<svg class="abs" style="left:0;top:0;pointer-events:none;z-index:10" width="1000" height="563" viewBox="0 0 1000 563"><rect x="873.80" y="229.20" width="118.40" height="267.10" rx="13.30" fill="none" stroke="#ff7f27" stroke-width="5.4"/></svg>
</body></html>
